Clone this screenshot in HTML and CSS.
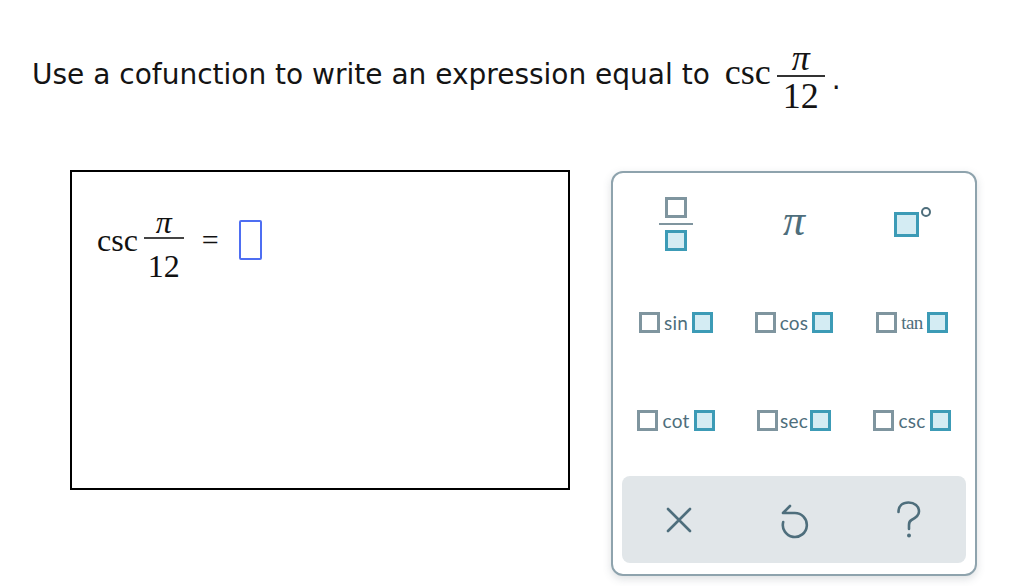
FILE: index.html
```html
<!DOCTYPE html>
<html>
<head>
<meta charset="utf-8">
<link rel="stylesheet" href="styles.css">
</head>
<body>
<div class="page">
  <p class="prompt">Use a cofunction to write an expression equal to <span class="math"><span class="fn">csc</span><span class="frac"><span class="num">π</span><span class="den">12</span></span></span><span class="dot">.</span></p>
  <div class="work">
    <div class="answer">
      <div class="expr">
        <span class="fn">csc</span>
        <span class="frac"><span class="num">π</span><span class="den">12</span></span>
        <span class="eq">=</span>
        <span class="cursor"></span>
      </div>
    </div>
    <div class="keypad">
      <div class="keys">
        <div class="key">
          <span class="fracicon"><span class="box grey"></span><span class="bar"></span><span class="box teal"></span></span>
        </div>
        <div class="key"><span class="pi">π</span></div>
        <div class="key"><span class="deg"><span class="box teal big"></span><span class="ring"></span></span></div>
        <div class="key"><span class="box grey"></span><span class="lbl">sin</span><span class="box teal"></span></div>
        <div class="key"><span class="box grey"></span><span class="lbl">cos</span><span class="box teal"></span></div>
        <div class="key"><span class="box grey"></span><span class="lbl serif">tan</span><span class="box teal"></span></div>
        <div class="key wide"><span class="box grey"></span><span class="lbl">cot</span><span class="box teal"></span></div>
        <div class="key tight"><span class="box grey"></span><span class="lbl">sec</span><span class="box teal"></span></div>
        <div class="key wide"><span class="box grey"></span><span class="lbl">csc</span><span class="box teal"></span></div>
      </div>
      <div class="toolbar">
        <button class="tool" aria-label="clear">
          <svg width="26" height="26" viewBox="0 0 26 26"><path d="M2 2 L24 24 M24 2 L2 24" stroke="#4e6e7c" stroke-width="2.6" stroke-linecap="round" fill="none"/></svg>
        </button>
        <button class="tool" aria-label="undo">
          <svg width="30" height="40" viewBox="0 0 30 40"><path d="M11 6 L4 13 L15.5 13 A12 12 0 1 1 4.2 22" stroke="#4e6e7c" stroke-width="2.6" stroke-linecap="round" stroke-linejoin="round" fill="none"/></svg>
        </button>
        <button class="tool" aria-label="help">
          <svg width="26" height="40" viewBox="0 0 26 40"><path d="M2.5 12 C2.5 6 6.5 2.5 12.5 2.5 C18.5 2.5 23 6 23 11.5 C23 16 19.5 18 15.5 20 C13.5 21 13 22.5 13 25 V29" stroke="#4e6e7c" stroke-width="2.6" stroke-linecap="round" fill="none"/><circle cx="13" cy="35.5" r="2" fill="#4e6e7c"/></svg>
        </button>
      </div>
    </div>
  </div>
</div>
</body>
</html>
```
FILE: styles.css
```css
html, body {
  margin: 0;
  padding: 0;
  background: #fff;
}

.page {
  width: 1026px;
  height: 586px;
  overflow: hidden;
}

.prompt {
  margin: 0;
  height: 170px;
  box-sizing: border-box;
  padding: 41px 0 0 32px;
  font-family: "DejaVu Sans", Verdana, sans-serif;
  font-size: 28px;
  line-height: 30px;
  color: #141414;
  white-space: nowrap;
}

.math {
  font-family: "Liberation Serif", "Times New Roman", serif;
  font-size: 36px;
  margin-left: 6px;
}

.math .fn {
  margin-right: 6px;
}

.frac {
  display: inline-block;
  text-align: center;
  font-family: "Liberation Serif", "Times New Roman", serif;
}

.num {
  font-style: italic;
}

.prompt .frac {
  vertical-align: -24px;
}

.prompt .frac .num {
  display: block;
  line-height: 34px;
  padding: 0 6px;
}

.prompt .frac .den {
  display: block;
  line-height: 34px;
  border-top: 2px solid #333;
  padding: 2px 6px 0;
}

.dot {
  margin-left: 7px;
  vertical-align: -5px;
}

.work {
  display: flex;
  align-items: flex-start;
  padding-left: 70px;
  gap: 41px;
}

.answer {
  width: 500px;
  height: 320px;
  box-sizing: border-box;
  border: 2px solid #000;
  padding: 26px 0 0 25px;
}

.expr {
  display: flex;
  align-items: center;
  font-family: "Liberation Serif", "Times New Roman", serif;
  font-size: 32px;
  color: #111;
}

.expr .fn {
  margin-right: 6px;
}

.expr .frac .num {
  display: block;
  line-height: 30px;
  padding: 9px 4px 0;
}

.expr .frac .den {
  display: block;
  line-height: 32px;
  border-top: 2px solid #444;
  padding: 11px 4px 0;
}

.expr .eq {
  margin: 0 20px 0 18px;
  font-size: 30px;
}

.cursor {
  display: inline-block;
  width: 19px;
  height: 36px;
  border: 2px solid #4e6ef2;
  border-radius: 2px;
}

.keypad {
  margin-top: 1px;
  width: 366px;
  height: 405px;
  box-sizing: border-box;
  border: 2px solid #8ea3ad;
  border-radius: 12px;
  box-shadow: 0 3px 8px rgba(60, 80, 90, 0.18);
  padding: 2px 0 11px;
  display: flex;
  flex-direction: column;
  background: #fff;
}

.keys {
  display: grid;
  grid-template-columns: repeat(3, 1fr);
  grid-auto-rows: 98px;
  padding: 0 4px;
  margin-bottom: 7px;
}

.key {
  display: flex;
  align-items: center;
  justify-content: center;
  gap: 4px;
  font-family: "Lato", "Open Sans", sans-serif;
  color: #4e6e7c;
}

.box {
  display: inline-block;
  width: 21px;
  height: 21px;
  box-sizing: border-box;
  border: 3px solid;
}

.box.grey {
  border-color: #7f959f;
  background: #fff;
}

.box.teal {
  border-color: #3c9bb6;
  background: #d4ecf3;
}

.box.big {
  width: 25px;
  height: 25px;
}

.lbl {
  font-size: 19px;
  line-height: 21px;
  letter-spacing: 0.2px;
}

.lbl.serif {
  font-family: "Liberation Serif", "Times New Roman", serif;
  font-size: 19px;
  letter-spacing: -0.5px;
}

.key.tight {
  gap: 2px;
}

.key.wide {
  gap: 5px;
}

.fracicon {
  display: flex;
  flex-direction: column;
  align-items: center;
  gap: 5px;
}

.fracicon .box {
  width: 22px;
  height: 21px;
}

.fracicon .bar {
  width: 34px;
  height: 2px;
  background: #7f959f;
}

.pi {
  font-family: "Liberation Serif", "Times New Roman", serif;
  font-style: italic;
  font-size: 44px;
  line-height: 44px;
  color: #4e6e7c;
  margin-top: -6px;
}

.deg {
  display: flex;
  align-items: flex-start;
  gap: 2px;
}

.ring {
  width: 10px;
  height: 10px;
  box-sizing: border-box;
  border: 2px solid #4e6e7c;
  border-radius: 50%;
  margin-top: -5px;
}

.toolbar {
  flex: 1;
  display: grid;
  grid-template-columns: repeat(3, 1fr);
  margin: 0 9px;
  background: #e1e6e9;
  border-radius: 8px;
}

.tool {
  border: none;
  background: transparent;
  padding: 0;
  display: flex;
  align-items: center;
  justify-content: center;
  cursor: pointer;
}
```
